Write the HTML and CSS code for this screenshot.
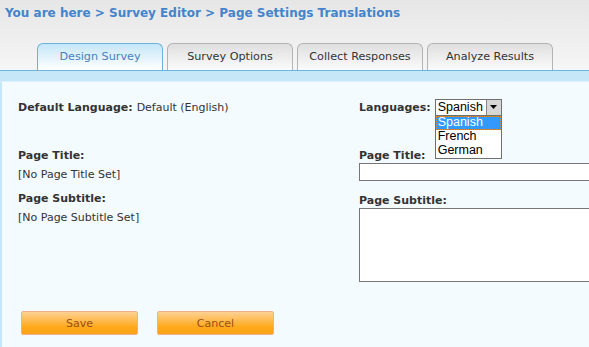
FILE: index.html
```html
<!DOCTYPE html>
<html lang="en">
<head>
  <meta charset="UTF-8">
  <title>Page Settings Translations</title>
  <link rel="stylesheet" href="styles.css">
</head>
<body>
  <div class="top">
    <div class="crumbs">You are here &gt; Survey Editor &gt; Page Settings Translations</div>
    <div class="tabs">
      <div class="tab active">Design Survey</div>
      <div class="tab">Survey Options</div>
      <div class="tab">Collect Responses</div>
      <div class="tab">Analyze Results</div>
    </div>
  </div>
  <div class="band"></div>
  <div class="panel">
    <div class="grid">
      <!-- left column: default language -->
      <div class="col left">
        <div class="line lang-line"><b>Default Language:</b> Default (English)</div>
        <div class="field-label">Page Title:</div>
        <div class="value">[No Page Title Set]</div>
        <div class="field-label">Page Subtitle:</div>
        <div class="value">[No Page Subtitle Set]</div>
      </div>
      <!-- right column: translation -->
      <div class="col right">
        <div class="line lang-line">
          <b>Languages:</b>
          <div class="select">
            <div class="select-box">
              <span>Spanish</span>
              <span class="arrow"><svg width="7" height="4" viewBox="0 0 7 4"><path d="M0 0h7L3.5 4z" fill="#000"/></svg></span>
            </div>
            <div class="options">
              <div class="opt selected">Spanish</div>
              <div class="opt">French</div>
              <div class="opt">German</div>
            </div>
          </div>
        </div>
        <div class="field-label">Page Title:</div>
        <input class="text-input" type="text">
        <div class="field-label sub">Page Subtitle:</div>
        <textarea class="text-area"></textarea>
      </div>
    </div>
    <div class="buttons">
      <button class="btn">Save</button>
      <button class="btn">Cancel</button>
    </div>
  </div>
</body>
</html>
```

FILE: styles.css
```css
:root {
  --blue-text: #4484cc;
  --tab-border: #b3b3b3;
  --band: #c6e7f8;
  --band-line: #6cb6dd;
  --panel-bg: #f3fbff;
  --label: #333333;
}
* { box-sizing: border-box; }
body {
  margin: 0;
  background: var(--panel-bg);
  font-family: "DejaVu Sans", Verdana, sans-serif;
  font-size: 11px;
  color: var(--label);
  overflow: hidden;
}
.top {
  background: linear-gradient(#e6e6e6, #f6f6f6);
  height: 70px;
  padding: 6px 0 0 5px;
  display: flex;
  flex-direction: column;
}
.crumbs {
  font-weight: bold;
  font-size: 12px;
  color: var(--blue-text);
}
.tabs {
  margin-top: auto;
  margin-left: 32px;
  display: flex;
  gap: 4px;
}
.tab {
  width: 126px;
  height: 27px;
  border: 1px solid var(--tab-border);
  border-bottom: none;
  border-radius: 6px 6px 0 0;
  background: linear-gradient(#e0dfe0, #fbfbfb);
  text-align: center;
  line-height: 26px;
  font-size: 11.2px;
  color: #333;
}
.tab.active {
  border-color: #6ab3da;
  background: linear-gradient(#c5e6f8, #ffffff);
  color: #4a7fc0;
}
.band {
  height: 12px;
  background: var(--band);
  border-top: 1px solid var(--band-line);
  border-bottom: 1px solid #dcf0fb;
}
.panel {
  border-left: 2px solid var(--band);
  height: 265px;
  padding: 14px 0 0 16px;
}
.grid {
  display: grid;
  grid-template-columns: 341px 1fr;
}
.line { height: 20px; display: flex; align-items: center; gap: 4px; }
.lang-line { margin-top: 1px; margin-bottom: 32px; }
.field-label { font-weight: bold; margin-bottom: 6px; }
.value { margin-bottom: 11px; }
.left .value:last-child { margin-bottom: 0; }
.left .field-label + .value { margin-top: 0; }
.select {
  position: relative;
  font-family: "Liberation Sans", Arial, sans-serif;
  font-size: 12.5px;
  color: #000;
}
.select-box {
  width: 67px;
  height: 17px;
  border: 1px solid #707070;
  background: #fff;
  display: flex;
  align-items: center;
  padding-left: 2px;
  justify-content: space-between;
}
.arrow {
  width: 15px;
  height: 15px;
  background: #d6d6d6;
  border-left: 1px solid #888;
  display: flex;
  align-items: center;
  justify-content: center;
}
.options {
  position: absolute;
  top: 16px;
  left: 0;
  width: 67px;
  background: #fff;
  border: 1px solid #707070;
  z-index: 5;
}
.opt { height: 14px; line-height: 13px; padding-left: 2px; }
.opt.selected {
  background: #3399ff;
  color: #fff;
  outline: 1px dotted #d98e3a;
  outline-offset: -1px;
}
.right .field-label { margin-bottom: 1px; }
.right .field-label.sub { margin-top: 13px; }
.text-input {
  display: block;
  width: 240px;
  height: 18px;
  border: 1px solid #777;
  background: #fff;
  margin: 0;
}
.text-area {
  display: block;
  width: 240px;
  height: 74px;
  border: 1px solid #777;
  background: #fff;
  margin: 0;
  resize: none;
}
.buttons {
  display: flex;
  gap: 19px;
  margin-top: 29px;
  padding-left: 3px;
}
.btn {
  width: 117px;
  height: 24px;
  border: 1px solid #eeb08a;
  border-radius: 2px;
  background: linear-gradient(#fdd193, #ffa818 70%, #ffa51a);
  font-family: "DejaVu Sans", Verdana, sans-serif;
  font-size: 11px;
  color: #9a4f14;
  padding: 0;
}
```
